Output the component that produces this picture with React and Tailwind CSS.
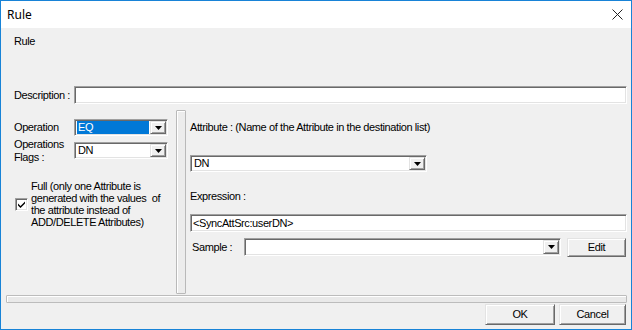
import React from 'react';

const sunken =
  'border border-t-[#a0a0a0] border-l-[#a0a0a0] border-b-white border-r-white shadow-[inset_1px_1px_0_#696969,inset_-1px_-1px_0_#e3e3e3] bg-white';
const raised =
  'border border-t-[#e3e3e3] border-l-[#e3e3e3] border-b-[#696969] border-r-[#696969] shadow-[inset_1px_1px_0_#fff,inset_-1px_-1px_0_#a0a0a0] bg-[#f0f0f0]';

const Arrow = () => (
  <div className={`${raised} w-[16px] h-full flex items-center justify-center shrink-0`}>
    <svg width="7" height="4" viewBox="0 0 7 4">
      <path d="M0 0H7L3.5 4Z" fill="#000" />
    </svg>
  </div>
);

const Combo = ({ value, selected = false, className = '' }) => (
  <div className={`${sunken} ${className} flex items-stretch p-[1px]`}>
    <div className="flex-1 flex items-center pl-[1px] pr-[1px] min-w-0">
      {value && (
        <span
          className={`pl-[1px] h-[13px] leading-[13px] ${
            selected ? 'bg-[#0078d7] text-white flex-1' : 'text-black'
          }`}
        >
          {value}
        </span>
      )}
    </div>
    <Arrow />
  </div>
);

const Button = ({ children, className = '' }) => (
  <div className={`${raised} ${className} flex items-center justify-center text-black`}>
    {children}
  </div>
);

const App = () => {
  return (
    <div
      className="w-[632px] h-[330px] border border-[#1883d7] flex flex-col bg-[#f0f0f0] text-[11px] tracking-[-0.4px] text-black"
      style={{ fontFamily: '"Liberation Sans", Arial, sans-serif' }}
    >
      {/* title bar */}
      <div className="h-[27px] bg-white flex items-center justify-between pl-[6px] pr-[8px] shrink-0">
        <span
          className="text-[12px] tracking-normal text-black"
          style={{ fontFamily: '"Noto Sans", "Open Sans", sans-serif' }}
        >
          Rule
        </span>
        <svg width="11" height="11" viewBox="0 0 11 11">
          <path d="M0.5 0.5L10.5 10.5M10.5 0.5L0.5 10.5" stroke="#222" strokeWidth="1" />
        </svg>
      </div>

      {/* body */}
      <div className="flex-1 flex flex-col pl-[5px] pr-[4px]">
        <div className="pl-[8px] mt-[7px] h-[13px] leading-[13px]">Rule</div>

        {/* description */}
        <div className="pl-[8px] mt-[38px] flex items-center h-[18px]">
          <span className="w-[60px] shrink-0">Description :</span>
          <div className={`${sunken} flex-1 h-full`} />
        </div>

        {/* middle */}
        <div className="mt-[6px] h-[184px] flex pl-[8px]">
          <div className="w-[154px] shrink-0 flex flex-col pt-[9px]">
            <div className="flex items-center h-[17px]">
              <span className="w-[60px] shrink-0">Operation</span>
              <Combo value="EQ" selected className="w-[94px] h-full" />
            </div>
            <div className="flex items-center h-[17px] mt-[6px]">
              <span className="w-[60px] shrink-0 leading-[13px]">
                Operations
                <br />
                Flags :
              </span>
              <Combo value="DN" className="w-[94px] h-full" />
            </div>
            <div className="flex items-center mt-[21px]">
              <div className={`${sunken} w-[13px] h-[13px] ml-[1px] shrink-0 flex items-center justify-center`}>
                <svg width="7" height="7" viewBox="0 0 7 7">
                  <path d="M0 2.5L2.5 5L7 0.5V2.5L2.5 7L0 4.5Z" fill="#000" />
                </svg>
              </div>
              <div className="ml-[3px] leading-[12px]">
                Full (only one Attribute is
                <br />
                generated with the values&nbsp; of
                <br />
                the attribute instead of
                <br />
                ADD/DELETE Attributes)
              </div>
            </div>
          </div>

          {/* separator */}
          <div className="ml-[8px] w-[10px] h-full shrink-0 border border-[#b9b9b9] shadow-[inset_1px_1px_0_#fff] bg-[#ececec] rounded-[1px]" />

          <div className="ml-[4px] flex-1 flex flex-col pt-[11px]">
            <div className="h-[13px] leading-[13px]">
              Attribute : (Name of the Attribute in the destination list)
            </div>
            <Combo value="DN" className="mt-[21px] w-[237px] h-[17px]" />
            <div className="mt-[18px] h-[13px] leading-[13px]">Expression :</div>
            <div className={`${sunken} mt-[11px] h-[18px] flex items-center pl-[2px]`}>
              &lt;SyncAttSrc:userDN&gt;
            </div>
            <div className="mt-[6px] flex items-center h-[18px]">
              <span className="w-[54px] pl-[2px] shrink-0">Sample :</span>
              <Combo className="w-[317px] h-full" />
              <Button className="ml-[6px] w-[59px] h-[19px]">Edit</Button>
            </div>
          </div>
        </div>

        {/* progress-like bar */}
        <div className="mt-[1px] h-[8px] border border-[#bcbcbc] shadow-[inset_1px_1px_0_#fff] bg-[#e9e9e9] rounded-[1px]" />

        {/* buttons */}
        <div className="mt-[1px] flex justify-end gap-[4px] pr-[1px]">
          <Button className="w-[70px] h-[21px]">OK</Button>
          <Button className="w-[67px] h-[21px]">Cancel</Button>
        </div>
      </div>
    </div>
  );
};

export default App;
